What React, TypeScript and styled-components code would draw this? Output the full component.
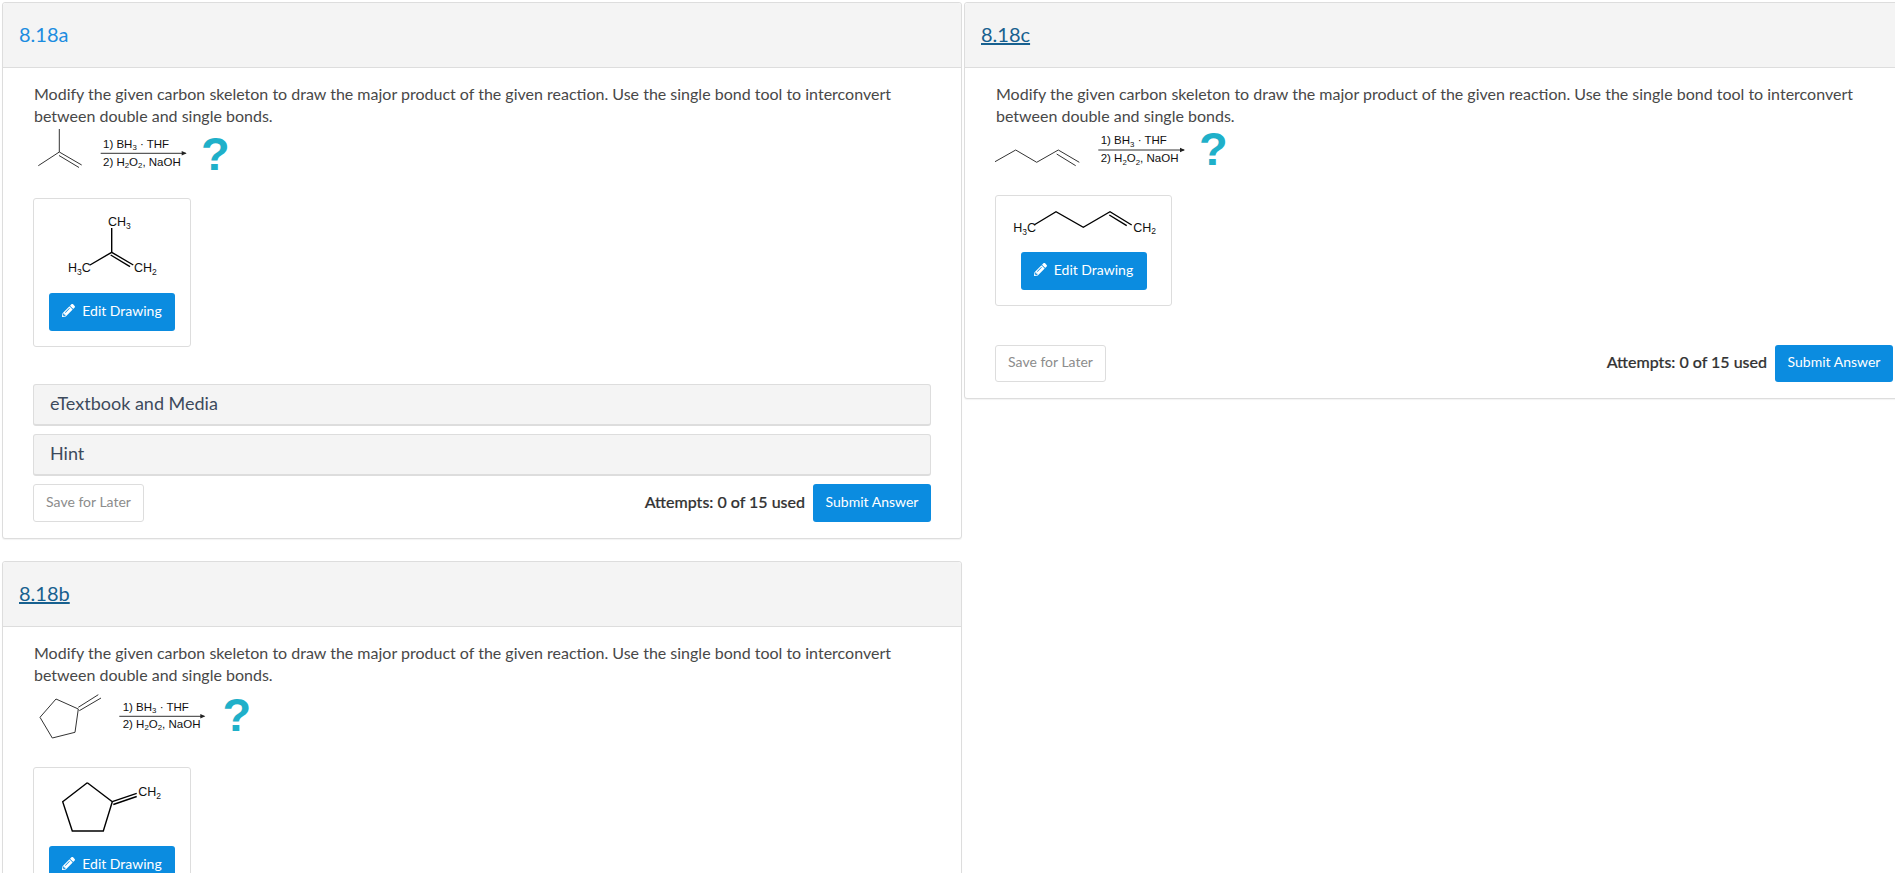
import React from 'react';
import styled, { createGlobalStyle } from 'styled-components';
import { FaPencilAlt } from 'react-icons/fa';

const GlobalStyle = createGlobalStyle`
  html, body {
    margin: 0;
    height: 100%;
    overflow: hidden;
    background: #fff;
  }
  body {
    font-family: Lato, "Open Sans", "Liberation Sans", sans-serif;
    color: #444;
  }
`;

const Page = styled.div`
  display: grid;
  grid-template-columns: 960px 960px;
  column-gap: 2px;
  align-items: start;
  width: 1922px;
  height: 871px;
  padding: 2px 0 0 2px;
  overflow: hidden;
`;

const Column = styled.div`
  display: flex;
  flex-direction: column;
  gap: 22px;
`;

const Card = styled.section`
  box-sizing: border-box;
  width: 960px;
  background: #fff;
  border: 1px solid #ddd;
  border-radius: 3px;
  box-shadow: 0 1px 1px rgba(0, 0, 0, 0.05);
`;

const CardHeader = styled.header`
  box-sizing: border-box;
  height: 65px;
  padding: 0 16px 2px;
  display: flex;
  align-items: center;
  background: #f4f4f4;
  border-bottom: 1px solid #ddd;
  border-radius: 3px 3px 0 0;
`;

const QuestionLink = styled.a<{ $active?: boolean }>`
  font-size: 20px;
  color: ${p => (p.$active ? '#1b8ce0' : '#17608f')};
  text-decoration: ${p => (p.$active ? 'none' : 'underline')};
  cursor: pointer;
`;

const CardBody = styled.div`
  padding: 16px 30px;
`;

const Prompt = styled.p`
  margin: -1px 0 1px;
  padding-left: 1px;
  font-size: 16px;
  line-height: 22px;
  color: #484848;
`;

const ReactionFigure = styled.svg`
  display: block;
  margin-bottom: 25px;
  overflow: visible;
`;

const DrawingCard = styled.div<{ $width: number }>`
  box-sizing: border-box;
  width: ${p => p.$width}px;
  padding-bottom: 15px;
  display: flex;
  flex-direction: column;
  align-items: center;
  background: #fff;
  border: 1px solid #ddd;
  border-radius: 3px;
`;

const PrimaryButton = styled.button<{ $height?: number }>`
  box-sizing: border-box;
  width: 118px;
  height: ${p => p.$height ?? 38}px;
  padding: 0 0 4px;
  display: inline-flex;
  align-items: center;
  justify-content: center;
  gap: 7px;
  font-family: inherit;
  font-size: 14px;
  color: #fff;
  background: #0b8ce0;
  border: 0;
  border-radius: 3px;
`;

const EditButton = styled(PrimaryButton)`
  width: 126px;
`;

const Panels = styled.div`
  margin-top: 37px;
`;

const Accordion = styled.div`
  box-sizing: border-box;
  height: 42px;
  margin-bottom: 8px;
  padding: 0 16px 3px;
  display: flex;
  align-items: center;
  font-size: 18px;
  color: #3d4a5c;
  background: #f4f4f4;
  border: 1px solid #ddd;
  border-bottom-width: 2px;
  border-radius: 3px;
`;

const Footer = styled.div<{ $top: number }>`
  margin-top: ${p => p.$top}px;
  display: flex;
  align-items: center;
  justify-content: space-between;
`;

const SaveButton = styled.button<{ $height: number }>`
  box-sizing: border-box;
  width: 111px;
  height: ${p => p.$height}px;
  padding: 0 0 4px;
  font-family: inherit;
  font-size: 14px;
  color: #8c8c8c;
  background: #fff;
  border: 1px solid #ddd;
  border-radius: 3px;
`;

const SubmitGroup = styled.div`
  display: flex;
  align-items: center;
  gap: 8px;
`;

const Attempts = styled.span`
  padding-bottom: 4px;
  font-size: 16px;
  font-weight: 500;
  color: #333;
  -webkit-text-stroke: 0.2px #333;
`;

const Bond = styled.polyline<{ $thin?: boolean }>`
  fill: none;
  stroke: ${p => (p.$thin ? '#333' : '#000')};
  stroke-width: ${p => (p.$thin ? 1 : 1.4)};
`;

const ChemText = styled.text<{ $size: number }>`
  font-family: "Liberation Sans", Arial, sans-serif;
  font-size: ${p => p.$size}px;
  fill: #111;
`;

const QuestionMark = styled.text`
  font-family: "Liberation Sans", Arial, sans-serif;
  font-size: 47px;
  font-weight: 700;
  fill: #1fb0c9;
`;

// "H_3C" -> H, subscript 3, C
const Formula: React.FC<{ x: number; y: number; size: number; text: string }> = ({ x, y, size, text }) => {
  const parts = text.split(/(_\d)/).filter(Boolean);
  let lowered = false;
  return (
    <ChemText x={x} y={y} $size={size}>
      {parts.map((part, i) => {
        if (part.startsWith('_')) {
          lowered = true;
          return <tspan key={i} dy={size * 0.2} fontSize={size * 0.68}>{part[1]}</tspan>;
        }
        const dy = lowered ? -size * 0.2 : 0;
        lowered = false;
        return <tspan key={i} dy={dy}>{part}</tspan>;
      })}
    </ChemText>
  );
};

interface Reaction {
  width: number;
  height: number;
  bonds: string[];
  arrow: [number, number, number];
  textX: number;
  top: number;
  bottom: number;
  markX: number;
  markY: number;
}

const ReactionImage: React.FC<{ r: Reaction }> = ({ r }) => {
  const [x1, x2, y] = r.arrow;
  return (
    <ReactionFigure width={r.width} height={r.height} viewBox={`0 0 ${r.width} ${r.height}`}>
      {r.bonds.map(b => <Bond key={b} points={b} $thin />)}
      <Formula x={r.textX} y={r.top} size={11.5} text="1) BH_3 · THF" />
      <Bond points={`${x1},${y} ${x2},${y}`} $thin />
      <path d={`M${x2 - 4} ${y - 2.2} L${x2 + 1} ${y} L${x2 - 4} ${y + 2.2} Z`} fill="#222" />
      <Formula x={r.textX} y={r.bottom} size={11.5} text="2) H_2O_2, NaOH" />
      <QuestionMark x={r.markX} y={r.markY}>?</QuestionMark>
    </ReactionFigure>
  );
};

interface Label { x: number; y: number; text: string }

const StructureFigure = styled.svg`
  display: block;
`;

const Drawing: React.FC<{ boxWidth: number; height: number; bonds: string[]; labels: Label[] }> = ({ boxWidth, height, bonds, labels }) => (
  <DrawingCard $width={boxWidth}>
    <StructureFigure width={boxWidth - 2} height={height} viewBox={`0 0 ${boxWidth - 2} ${height}`}>
      {bonds.map(b => <Bond key={b} points={b} />)}
      {labels.map(l => <Formula key={l.text} x={l.x} y={l.y} size={12.5} text={l.text} />)}
    </StructureFigure>
    <EditButton>
      <FaPencilAlt size={13} />
      Edit Drawing
    </EditButton>
  </DrawingCard>
);

const SubmitBar: React.FC<{ top: number; height: number }> = ({ top, height }) => (
  <Footer $top={top}>
    <SaveButton $height={height}>Save for Later</SaveButton>
    <SubmitGroup>
      <Attempts>Attempts: 0 of 15 used</Attempts>
      <PrimaryButton $height={height}>Submit Answer</PrimaryButton>
    </SubmitGroup>
  </Footer>
);

const PROMPT =
  'Modify the given carbon skeleton to draw the major product of the given reaction. Use the single bond tool to interconvert between double and single bonds.';

const reactionA: Reaction = {
  width: 240,
  height: 45,
  bonds: ['26.3,1 26.3,24', '5.3,37.7 26.3,24 48.7,37', '26,27.5 46,39.5'],
  arrow: [67.7, 152.7, 25.3],
  textX: 70,
  top: 19.7,
  bottom: 37.7,
  markX: 168,
  markY: 42,
};

const reactionB: Reaction = {
  width: 240,
  height: 55,
  bonds: ['23,12 45.3,22 42,45.3 19.3,51 7,30.3 23,12', '45.3,20.3 65.3,7.7', '46.3,23.7 68,11'],
  arrow: [86.3, 171.3, 29.3],
  textX: 89.7,
  top: 23.7,
  bottom: 41,
  markX: 189.5,
  markY: 43.7,
};

const reactionC: Reaction = {
  width: 240,
  height: 42,
  bonds: ['0,33.7 20.7,22 41.7,34.3 63.3,22 84.3,34.3', '61.7,26 80.7,37.7'],
  arrow: [103.3, 189, 22],
  textX: 105.7,
  top: 16.3,
  bottom: 34.3,
  markX: 204,
  markY: 37,
};

export default function App() {
  return (
    <>
      <GlobalStyle />
      <Page>
        <Column>
          <Card>
            <CardHeader>
              <QuestionLink $active>8.18a</QuestionLink>
            </CardHeader>
            <CardBody>
              <Prompt>{PROMPT}</Prompt>
              <ReactionImage r={reactionA} />
              <Drawing
                boxWidth={158}
                height={94}
                bonds={['77.7,29 77.7,53.3', '56,66 77.7,53.3 99.3,66', '76.7,56 96,67.7']}
                labels={[
                  { x: 74, y: 27, text: 'CH_3' },
                  { x: 34, y: 73, text: 'H_3C' },
                  { x: 100, y: 73, text: 'CH_2' },
                ]}
              />
              <Panels>
                <Accordion>eTextbook and Media</Accordion>
                <Accordion>Hint</Accordion>
              </Panels>
              <SubmitBar top={0} height={38} />
            </CardBody>
          </Card>
          <Card>
            <CardHeader>
              <QuestionLink>8.18b</QuestionLink>
            </CardHeader>
            <CardBody>
              <Prompt>{PROMPT}</Prompt>
              <ReactionImage r={reactionB} />
              <Drawing
                boxWidth={158}
                height={78}
                bonds={[
                  '53.3,14.7 78.3,33.7 69.3,63 38.3,63 28.7,33.7 53.3,14.7',
                  '78.3,33.7 102.7,25.3',
                  '79.3,36.5 102.7,28.5',
                ]}
                labels={[{ x: 104.3, y: 28, text: 'CH_2' }]}
              />
            </CardBody>
          </Card>
        </Column>
        <Column>
          <Card>
            <CardHeader>
              <QuestionLink>8.18c</QuestionLink>
            </CardHeader>
            <CardBody>
              <Prompt>{PROMPT}</Prompt>
              <ReactionImage r={reactionC} />
              <Drawing
                boxWidth={177}
                height={56}
                bonds={['38,29 60,15.7 87.3,31.3 114,15.7 135.7,29', '113.3,19 130.7,29.7']}
                labels={[
                  { x: 17.3, y: 36, text: 'H_3C' },
                  { x: 137.3, y: 35.7, text: 'CH_2' },
                ]}
              />
              <SubmitBar top={39} height={37} />
            </CardBody>
          </Card>
        </Column>
      </Page>
    </>
  );
}
